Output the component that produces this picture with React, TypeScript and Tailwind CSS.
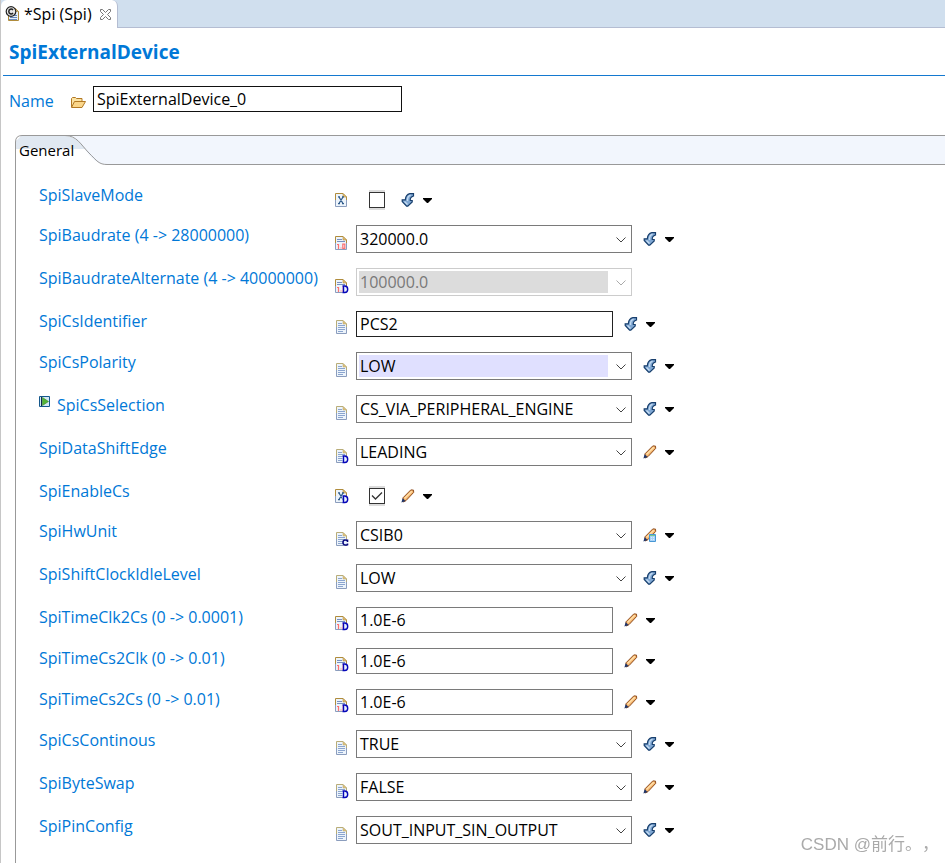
import { useState } from 'react';

type Status = 'doc' | 'num' | 'bool';
type Action = 'arrow' | 'pencil' | 'calc';

type Row = {
  name: string;
  label: string;
  kind: 'check' | 'select' | 'text';
  value: string;
  status: Status;
  mark?: 'D' | 'C';
  action?: Action;
  disabled?: boolean;
  active?: boolean;
  multi?: boolean;
};

const rows: Row[] = [
  { name: 'slaveMode', label: 'SpiSlaveMode', kind: 'check', value: '', status: 'bool', action: 'arrow' },
  { name: 'baudrate', label: 'SpiBaudrate (4 -> 28000000)', kind: 'select', value: '320000.0', status: 'num', action: 'arrow' },
  { name: 'baudrateAlt', label: 'SpiBaudrateAlternate (4 -> 40000000)', kind: 'select', value: '100000.0', status: 'num', mark: 'D', disabled: true },
  { name: 'csIdentifier', label: 'SpiCsIdentifier', kind: 'text', value: 'PCS2', status: 'doc', action: 'arrow', active: true },
  { name: 'csPolarity', label: 'SpiCsPolarity', kind: 'select', value: 'LOW', status: 'doc', action: 'arrow', active: true },
  { name: 'csSelection', label: 'SpiCsSelection', kind: 'select', value: 'CS_VIA_PERIPHERAL_ENGINE', status: 'doc', action: 'arrow', multi: true },
  { name: 'dataShiftEdge', label: 'SpiDataShiftEdge', kind: 'select', value: 'LEADING', status: 'doc', mark: 'D', action: 'pencil' },
  { name: 'enableCs', label: 'SpiEnableCs', kind: 'check', value: 'on', status: 'bool', mark: 'D', action: 'pencil' },
  { name: 'hwUnit', label: 'SpiHwUnit', kind: 'select', value: 'CSIB0', status: 'doc', mark: 'C', action: 'calc' },
  { name: 'idleLevel', label: 'SpiShiftClockIdleLevel', kind: 'select', value: 'LOW', status: 'doc', action: 'arrow' },
  { name: 'timeClk2Cs', label: 'SpiTimeClk2Cs (0 -> 0.0001)', kind: 'text', value: '1.0E-6', status: 'num', mark: 'D', action: 'pencil' },
  { name: 'timeCs2Clk', label: 'SpiTimeCs2Clk (0 -> 0.01)', kind: 'text', value: '1.0E-6', status: 'num', mark: 'D', action: 'pencil' },
  { name: 'timeCs2Cs', label: 'SpiTimeCs2Cs (0 -> 0.01)', kind: 'text', value: '1.0E-6', status: 'num', mark: 'D', action: 'pencil' },
  { name: 'csContinous', label: 'SpiCsContinous', kind: 'select', value: 'TRUE', status: 'doc', action: 'arrow' },
  { name: 'byteSwap', label: 'SpiByteSwap', kind: 'select', value: 'FALSE', status: 'doc', mark: 'D', action: 'pencil' },
  { name: 'pinConfig', label: 'SpiPinConfig', kind: 'select', value: 'SOUT_INPUT_SIN_OUTPUT', status: 'doc', action: 'arrow' },
];

function StatusIcon({ status, mark }: { status: Status; mark?: 'D' | 'C' }) {
  const edge = status === 'doc' ? '#b9ad78' : '#b08c3c';
  const x = status === 'doc' ? 1.5 : 0.5;
  return (
    <svg width="16" height="16" viewBox="0 0 16 16" aria-hidden="true">
      <path d={`M${x} 1.5H8l3.500 3.500V14.500H${x}z`} fill="#edf4fb" />
      <path d={`M${x} 10V1.500H8l3.500 3.500V10`} fill="none" stroke={edge} />
      <path d={`M${x} 8v6.500h${11.5 - x}V8`} fill="none" stroke="#8b9dbd" />
      <path d="M8 1.500V5h3.500z" fill="#e5c277" stroke={edge} strokeWidth=".6" />
      {status === 'doc' && <path d="M3 4.500h4M3 6.500h7M3 8.500h7M3 10.500h7M3 12.500h5" stroke="#8ba5cf" />}
      {status === 'num' && (
        <>
          <path d="M2 4.500h5M2 6.500h8" stroke="#7890c0" />
          <path d="M2 9.500h1.500V14M5.500 13h1" fill="none" stroke="#ff7070" strokeWidth="1.200" />
          <path d="M7.800 9.200h2v4.200h-2z" fill="none" stroke="#ff7070" strokeWidth="1.200" />
        </>
      )}
      {status === 'bool' && <path d="M4 5l4 6.500M8 5l-4 6.500M3 4.800h2M7 4.800h2M3 11.700h2M7 11.700h2" stroke="#315d8d" strokeWidth="1.300" />}
      {mark === 'D' && (
        <path d="M7.500 8h2.200c2.300 0 3 1.300 3 3.200s-.7 3.300-3 3.300H7.500M8.500 8v6.500" fill="#e9f2ff" stroke="#0505b8" strokeWidth="1.400" />
      )}
      {mark === 'C' && (
        <path d="M12.500 11V9.300h-1c-2.400-.7-3.500.3-3.500 2.200s1.200 3 4.500 2.200v-1.200" fill="#e9f2ff" stroke="#08087c" strokeWidth="1.600" />
      )}
    </svg>
  );
}

function ActionIcon({ action }: { action: Action }) {
  if (action === 'arrow') {
    return (
      <svg width="14" height="14" viewBox="0 0 14 14" aria-hidden="true">
        <path
          d="M12.500.7H8.800C6 1.300 4.600 3.500 4.300 6.800H1.200v1.700l4.400 4.700h1.200L11.200 9V7.500H9.300C9 5.500 9.600 4 12.500 3z"
          fill="#7fa7d3"
          stroke="#183f6d"
          strokeWidth="1.200"
        />
        <path d="M9.500 2.200C7 3.200 6.300 5 6.500 8M3.500 8.500l3 3" fill="none" stroke="#c3dbf2" strokeWidth="1.300" />
      </svg>
    );
  }
  return (
    <svg width="14" height="14" viewBox="0 0 14 14" aria-hidden="true">
      <path d="M2 8.800L9.800.9l2.700.2.200 2.300L5 11.600 2.300 13z" fill="#f4b56d" stroke="#8f4c1c" />
      <path d="M3.500 9.500l7.400-7.300" stroke="#ffe0ac" strokeWidth="1.300" />
      <path d="M1.600 9.300l3 2.600L.4 13.600z" fill="#20366b" />
      {action === 'calc' && (
        <>
          <path d="M6.500 6.500h6v7h-6z" fill="#a9d3f8" stroke="#4797d4" />
          <path d="M7 7.500h5" stroke="#77c98a" />
          <path d="M8 9.500h4M8 11.500h4" stroke="#d9ecfb" strokeDasharray="1 1" />
        </>
      )}
    </svg>
  );
}

function ActionMenu({ action, label }: { action: Action; label: string }) {
  return (
    <button type="button" aria-label={`${label} options`} className="flex items-center gap-2">
      <ActionIcon action={action} />
      <svg width="9" height="5" viewBox="0 0 9 5" aria-hidden="true">
        <path d="M0 0h9v1L5 5H4L0 1z" fill="#000" />
      </svg>
    </button>
  );
}

function Control({ row }: { row: Row }) {
  const [value, setValue] = useState(row.value);

  if (row.kind === 'check') {
    return (
      <div className="mt-[5px] ml-[13px] flex h-5 items-center bg-[#dcdcdc]">
        <span className="relative flex">
          <input
            id={row.name}
            type="checkbox"
            checked={value === 'on'}
            onChange={e => setValue(e.target.checked ? 'on' : '')}
            className="peer size-4 appearance-none border border-[#333] bg-white"
          />
          <svg className="pointer-events-none absolute inset-0 hidden peer-checked:block" width="16" height="16" viewBox="0 0 16 16" aria-hidden="true">
            <path d="M3 7.500l3.500 3.500L13 4.500" fill="none" stroke="#333" strokeWidth="1.300" />
          </svg>
        </span>
      </div>
    );
  }

  if (row.kind === 'text') {
    return (
      <input
        id={row.name}
        type="text"
        value={value}
        onChange={e => setValue(e.target.value)}
        className={`h-[26px] w-[257px] border bg-white px-[3px] ${row.active ? 'border-[#222]' : 'border-[#7a7a7a]'}`}
      />
    );
  }

  return (
    <div className="relative">
      <select
        id={row.name}
        defaultValue={row.value}
        disabled={row.disabled}
        className={`block h-7 w-[276px] appearance-none border bg-clip-content py-0.5 pr-[23px] pl-0.5 indent-px leading-5 opacity-100 ${
          row.disabled ? 'border-[#ccc] bg-[#dcdcdc] text-[#787878]' : row.active ? 'border-[#7a7a7a] bg-[#e0e0ff]' : 'border-[#7a7a7a] bg-white'
        }`}
      >
        <option>{row.value}</option>
      </select>
      <svg className="pointer-events-none absolute top-3 right-1.5" width="10" height="6" viewBox="0 0 10 6" aria-hidden="true">
        <path d="M.5.500L5 5 9.500.500" fill="none" stroke={row.disabled ? '#aaa' : '#444'} />
      </svg>
    </div>
  );
}

function FormRow({ row }: { row: Row }) {
  return (
    <div className="flex">
      <div className="flex w-[296px] shrink-0 leading-5 text-[#0078d7]">
        {row.multi && (
          <svg className="mt-px mr-[7px] shrink-0" width="11" height="11" viewBox="0 0 11 11" aria-hidden="true">
            <path d="M.5.500h10v10H.5z" fill="#d4e9f5" stroke="#15588c" />
            <path d="M2.500 1v9" stroke="#102c50" />
            <path d="M3.500 1.500L9.500 5.500l-6 4z" fill="#55b534" stroke="#37862c" strokeWidth=".6" />
          </svg>
        )}
        <label htmlFor={row.name} className="whitespace-nowrap">{row.label}</label>
      </div>
      <div className="mb-0.5 flex w-[21px] shrink-0 items-end">
        <StatusIcon status={row.status} mark={row.mark} />
      </div>
      <Control row={row} />
      {row.action && (
        <div className={row.kind === 'check' ? 'mt-[5px] ml-4 flex items-center' : 'ml-[11px] flex items-center'}>
          <ActionMenu action={row.action} label={row.label} />
        </div>
      )}
    </div>
  );
}

export default function App() {
  const [name, setName] = useState('SpiExternalDevice_0');

  return (
    <div className="flex min-h-screen flex-col overflow-x-hidden border-l border-[#c6c6c6] bg-white font-['Open_Sans','Noto_Sans_CJK_SC',sans-serif] text-base text-black">
      <div className="flex h-7 bg-[#d0dfee]">
        <div className="flex w-[117px] items-center rounded-t-md border-r border-[#b4bdd2] bg-white pl-1">
          <svg width="16" height="16" viewBox="0 0 16 16" aria-hidden="true">
            <path d="M3.500 2.500h7l3 3v9h-10z" fill="#e8f1fa" stroke="#b08c3c" />
            <path d="M5 9.500h7M5 11.500h7M4 13.500h8" stroke="#6889bd" />
            <path d="M10.500 2.500v3h3z" fill="#e5c277" stroke="#b08c3c" strokeWidth=".6" />
            <circle cx="6" cy="5.500" r="4.800" fill="#e7e7e7" stroke="#222" strokeWidth="1.200" />
            <path d="M8 4C6.500 2.200 3.800 3.200 3.800 5.500S6.500 8.800 8 7" fill="none" stroke="#222" strokeWidth="1.500" />
          </svg>
          <span className="ml-[3px] whitespace-nowrap">*Spi (Spi)</span>
          <button type="button" aria-label="Close" className="ml-2">
            <svg width="11" height="11" viewBox="0 0 11 11" aria-hidden="true">
              <path d="M.5.500h2l3 3 3-3h2v2l-3 3 3 3v2h-2l-3-3-3 3h-2v-2l3-3-3-3z" fill="#fff" stroke="#777" />
            </svg>
          </button>
        </div>
        <div className="flex-1 border-b border-[#b4bdd2]" />
      </div>

      <h1 className="ml-0.5 h-12 border-b border-[#1479d0] pl-1.5 text-[19px] leading-[48px] font-bold text-[#0078d7]">SpiExternalDevice</h1>

      <div className="mt-2.5 flex h-[26px] items-center pl-2">
        <label htmlFor="name" className="w-[61px] pt-1 text-[#0078d7]">Name</label>
        <svg className="mt-1.5" width="16" height="14" viewBox="0 0 16 14" aria-hidden="true">
          <path d="M1.500 12V3.500l1-1h3l1 1h5.500v3" fill="#fbe3a3" stroke="#b27824" />
          <path d="M1.500 12.500L4.500 6.500h11l-3.500 6z" fill="#fad68a" stroke="#b27824" />
        </svg>
        <input
          id="name"
          type="text"
          value={name}
          onChange={e => setName(e.target.value)}
          className="ml-[7px] h-[26px] w-[309px] border border-[#111] bg-white px-[3px]"
        />
      </div>

      <section className="mt-[23px] ml-3.5 flex flex-1 flex-col">
        <div className="flex h-[30px]">
          <div className="relative w-[92px]">
            <svg className="absolute inset-0" width="92" height="30" viewBox="0 0 92 30" aria-hidden="true">
              <path d="M50 0h42v29.500C76 29.500 70 12 62 5 58 2 55 .5 50 .5z" fill="#f2f6fd" />
              <path d="M1 14V6l5-5h44c9 0 13 5 21 13z" fill="#e0e8f1" />
              <path d="M.5 30V7Q.5.500 7 .500H92" fill="none" stroke="#999" />
              <path d="M50 .500C62 .500 66 10 74 18s10 11.500 18 11.500" fill="none" stroke="#999" />
            </svg>
            <h2 className="relative pl-1 text-[15px] leading-[30px]">General</h2>
          </div>
          <div className="flex-1 border-y border-[#999] bg-[#f2f6fd]" />
        </div>
        <form className="flex flex-1 flex-col gap-[15px] border-l border-[#999] pt-5 pb-2 pl-[23px]">
          {rows.map(row => (
            <FormRow key={row.name} row={row} />
          ))}
        </form>
      </section>

      <div className="fixed right-1.5 bottom-1.5 font-['Liberation_Sans','Noto_Sans_CJK_SC',sans-serif] text-[17px] leading-6 text-[#aaa] [text-spacing-trim:space-all]">
        CSDN @前行。，
      </div>
    </div>
  );
}
